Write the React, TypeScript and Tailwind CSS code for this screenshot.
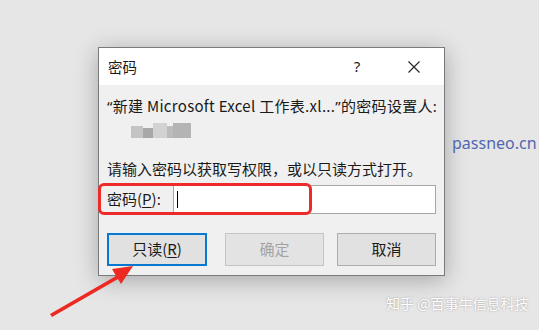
import React from "react";

const font = { fontFamily: '"Microsoft YaHei","Noto Sans CJK SC","Noto Sans",sans-serif' };
const latin = { fontFamily: '"Noto Sans","Noto Sans CJK SC",sans-serif' };

export default function App() {
  return (
    <div
      className="relative w-[539px] h-[330px] overflow-hidden bg-[#e6e6e6] text-[#1a1a1a]"
      style={font}
    >
      <div className="pl-[98px] pt-[47px]">
        <div className="w-[347px] h-[229px] border border-[#7a7a7a] bg-[#f0f0f0] shadow-[0_4px_22px_rgba(0,0,0,0.28)] flex flex-col">
          {/* title bar */}
          <div className="h-[37px] bg-white flex items-center pl-[9px] text-[14.5px]">
            <span className="flex-1">密码</span>
            <span className="w-[20px] text-center mr-[41px] text-[15px]" style={latin}>?</span>
            <svg width="12" height="12" viewBox="0 0 12 12" className="mr-[24px]">
              <path d="M0.5 0.5L11.5 11.5M11.5 0.5L0.5 11.5" stroke="#222" strokeWidth="1.1" />
            </svg>
          </div>
          {/* body */}
          <div className="flex flex-col pl-[8px] pr-[8px]">
            <div className="mt-[11px] text-[15px] leading-[20px] whitespace-nowrap tracking-[0.3px]">
              <span style={latin}>“</span>新建 Microsoft Excel 工作表.xl...<span style={latin}>”</span>的密码设置人<span style={latin}>:</span>
            </div>
            <div className="ml-[24px] mt-[7px] flex h-[15px]">
              <div className="w-[12px] h-[12px] mt-[3px] bg-[#c4c4c4]" />
              <div className="w-[10px] h-[10px] mt-[5px] bg-[#a8a8a8]" />
              <div className="w-[14px] h-[15px] bg-[#d2d2d2]" />
              <div className="w-[6px] h-[12px] mt-[3px] bg-[#bcbcbc]" />
              <div className="w-[18px] h-[15px] bg-[#b4b4b4]" />
            </div>
            <div className="mt-[21px] text-[15px] leading-[20px] whitespace-nowrap">
              请输入密码以获取写权限，或以只读方式打开。
            </div>
            {/* password row */}
            <div className="relative mt-[4px] h-[32px] flex items-center">
              <div className="absolute left-[-9px] top-0 w-[214px] h-[32px] border-[3px] border-[#ee2b2b] rounded-[6px]" />
              <span className="text-[15px] w-[66px]">
                密码(<span className="underline underline-offset-2">P</span>):
              </span>
              <div className="h-[29px] w-[263px] mt-[1px] bg-white border border-[#a6a6a6] flex items-center pl-[3px]">
                <div className="w-[1px] h-[17px] bg-black" />
              </div>
            </div>
            {/* buttons */}
            <div className="mt-[18px] flex">
              <div className="w-[100px] h-[33px] bg-[#e1e1e1] border-2 border-[#0a78d1] flex items-center justify-center text-[15px]">
                只读(<span className="underline underline-offset-2">R</span>)
              </div>
              <div className="ml-[18px] w-[99px] h-[33px] bg-[#e3e3e3] border border-[#c4c4c4] flex items-center justify-center text-[15px] text-[#a3a3a3]">
                确定
              </div>
              <div className="ml-[13px] w-[99px] h-[33px] bg-[#e1e1e1] border border-[#adadad] flex items-center justify-center text-[15px]">
                取消
              </div>
            </div>
          </div>
        </div>
      </div>

      {/* watermark passneo */}
      <div
        className="absolute left-[452px] top-[131px] text-[16px] text-[#5366b0]"
        style={{ fontFamily: '"Noto Sans","DejaVu Sans",sans-serif' }}
      >
        passneo.cn
      </div>

      {/* zhihu watermark */}
      <div
        className="absolute left-[386px] top-[293px] text-[14px] text-white [text-shadow:0_0_2px_rgba(0,0,0,0.35)] whitespace-nowrap"
      >
        知乎 @百事牛信息科技
      </div>

      {/* red arrow */}
      <svg className="absolute left-0 top-0" width="539" height="330" viewBox="0 0 539 330">
        <path d="M50 314 L116 276 L112 269 L133 266 L121 284 L118 279 L52 317 Z" fill="#ec2a22" />
      </svg>
    </div>
  );
}
